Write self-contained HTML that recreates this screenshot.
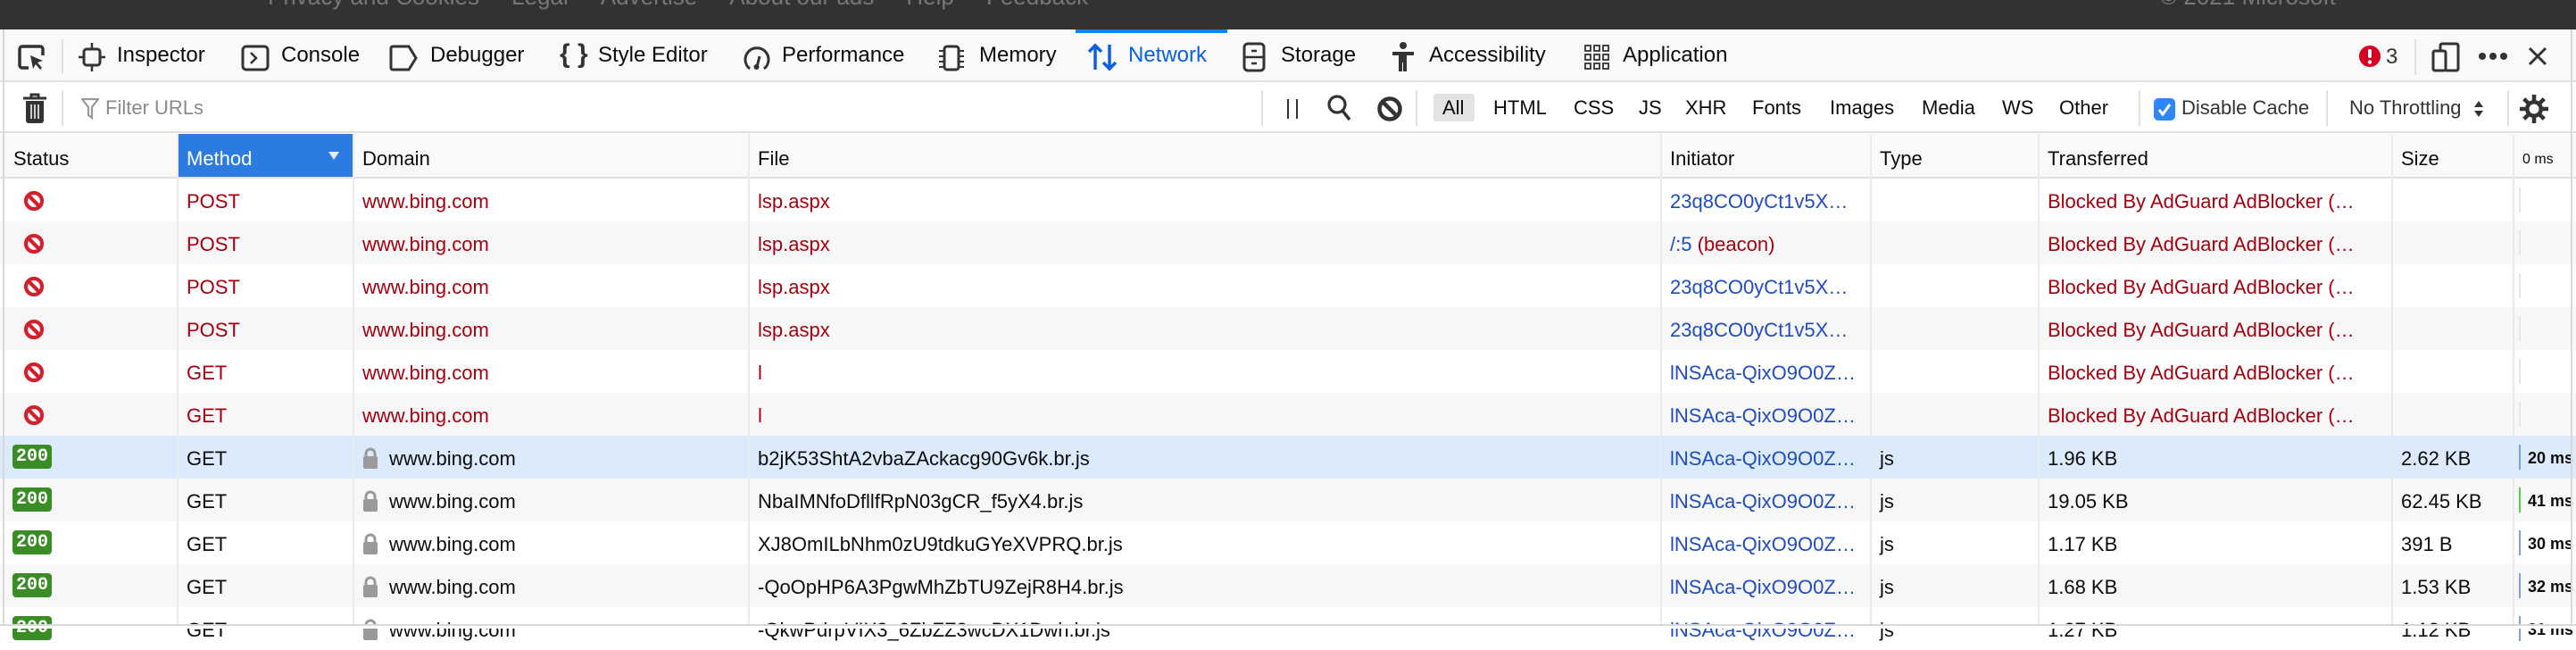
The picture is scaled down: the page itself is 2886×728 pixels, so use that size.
<!DOCTYPE html>
<html><head><meta charset="utf-8"><style>
*{margin:0;padding:0;box-sizing:border-box}
body{width:2886px;height:704px;overflow:hidden;background:#fff;font-family:"Liberation Sans",sans-serif;position:relative;color:#0c0c0d}
.a{position:absolute;white-space:nowrap}
.top{left:0;top:0;width:2886px;height:33px;background:#323232}
.tb{left:0;top:33px;width:2886px;height:59px;background:#f9f9fa;border-bottom:2px solid #e0e0e2}
.fr{left:0;top:93px;width:2886px;height:56px;background:#fff;border-bottom:2px solid #e0e0e2}
.hd{left:0;top:150px;width:2886px;height:50px;background:#f9f9fa;border-bottom:2px solid #e0e0e2}
.t{font-size:24px;top:48px;color:#0c0c0d}
.f{font-size:22px;top:108px;color:#0c0c0d}
.h{font-size:22px;top:165px;color:#0c0c0d}
.sep{width:2px;background:#e0e0e2}
.row{position:absolute;left:0;width:2886px;height:48px;font-size:22px}
.row span{position:absolute;top:13px;white-space:nowrap}
.r{color:#a4000f}
.b{color:#1f4dbd}
.vl{position:absolute;top:0;width:2px;height:704px;background:#ebebeb}
svg{position:absolute}
</style></head><body>
<div class="a top"></div>
<div class="a" style="left:300px;top:-19px;font-size:26px;color:#777">Privacy and Cookies&nbsp;&nbsp;&nbsp;&nbsp;&nbsp;Legal&nbsp;&nbsp;&nbsp;&nbsp;&nbsp;Advertise&nbsp;&nbsp;&nbsp;&nbsp;&nbsp;About our ads&nbsp;&nbsp;&nbsp;&nbsp;&nbsp;Help&nbsp;&nbsp;&nbsp;&nbsp;&nbsp;Feedback</div>
<div class="a" style="left:2420px;top:-19px;font-size:26px;color:#777">© 2021 Microsoft</div>

<div class="a tb"></div>
<svg style="left:20px;top:50px" width="32" height="30" viewBox="0 0 32 30"><path d="M12 26H5a3 3 0 0 1-3-3V5a3 3 0 0 1 3-3h20a3 3 0 0 1 3 3v7" fill="none" stroke="#333" stroke-width="3.5"/><path d="M14 12l14 6-6 2 5 6-2 2-5-6-3 5z" fill="#333"/></svg>
<div class="a sep" style="left:69px;top:44px;height:38px"></div>
<svg style="left:88px;top:47px" width="30" height="34" viewBox="0 0 30 34"><rect x="6" y="8" width="18" height="18" rx="3" fill="none" stroke="#333" stroke-width="3"/><path d="M15 1v7M15 26v7M0 17h6M24 17h6" stroke="#333" stroke-width="2.5"/></svg>
<div class="a t" style="left:131px">Inspector</div>
<svg style="left:270px;top:50px" width="32" height="30"><rect x="2" y="2" width="28" height="26" rx="4" fill="none" stroke="#333" stroke-width="3"/><path d="M11 9l6 6-6 6" fill="none" stroke="#333" stroke-width="2.5"/></svg>
<div class="a t" style="left:315px">Console</div>
<svg style="left:436px;top:50px" width="32" height="30"><path d="M4 2h18l8 13-8 13H4a2 2 0 0 1-2-2V4a2 2 0 0 1 2-2z" fill="none" stroke="#333" stroke-width="3"/></svg>
<div class="a t" style="left:482px">Debugger</div>
<div class="a" style="left:627px;top:44px;font-size:30px;color:#333;font-weight:bold">{&nbsp;}</div>
<div class="a t" style="left:670px">Style Editor</div>
<svg style="left:832px;top:49px" width="32" height="32"><path d="M8 28A13 13 0 1 1 24 28" fill="none" stroke="#333" stroke-width="3"/><path d="M16 26l3-12" stroke="#333" stroke-width="3"/><circle cx="15.5" cy="26" r="3" fill="#333"/></svg>
<div class="a t" style="left:876px">Performance</div>
<svg style="left:1050px;top:49px" width="32" height="32"><rect x="8" y="3" width="16" height="26" rx="3" fill="none" stroke="#333" stroke-width="3"/><path d="M2 8h5M2 14h5M2 20h5M2 26h5M25 8h5M25 14h5M25 20h5M25 26h5" stroke="#333" stroke-width="2"/></svg>
<div class="a t" style="left:1097px">Memory</div>
<div class="a" style="left:1205px;top:33px;width:170px;height:4px;background:#0a84ff"></div>
<svg style="left:1218px;top:48px" width="34" height="32"><path d="M9 30V3M2 10l7-7 7 7M25 2v27M18 22l7 7 7-7" fill="none" stroke="#0a60df" stroke-width="3.5"/></svg>
<div class="a t" style="left:1264px;color:#0a60df">Network</div>
<svg style="left:1392px;top:47px" width="26" height="34"><rect x="2" y="2" width="22" height="30" rx="4" fill="none" stroke="#333" stroke-width="3"/><path d="M2 17h22M10 10h6M10 24h6" stroke="#333" stroke-width="2.5"/></svg>
<div class="a t" style="left:1435px">Storage</div>
<svg style="left:1558px;top:46px" width="28" height="36"><circle cx="14" cy="5" r="4" fill="#333"/><path d="M2 12h24v4h-8v18h-4v-10h-1v10h-4V16H2z" fill="#333"/></svg>
<div class="a t" style="left:1601px">Accessibility</div>
<svg style="left:1775px;top:50px" width="28" height="28" fill="none" stroke="#333" stroke-width="1.8"><rect x="1" y="1" width="6" height="6"/><rect x="11" y="1" width="6" height="6"/><rect x="21" y="1" width="6" height="6"/><rect x="1" y="11" width="6" height="6"/><rect x="11" y="11" width="6" height="6"/><rect x="21" y="11" width="6" height="6"/><rect x="1" y="21" width="6" height="6"/><rect x="11" y="21" width="6" height="6"/><rect x="21" y="21" width="6" height="6"/></svg>
<div class="a t" style="left:1818px">Application</div>
<svg style="left:2643px;top:51px" width="24" height="24"><circle cx="12" cy="12" r="12" fill="#d70022"/><rect x="10" y="4" width="4" height="10" rx="2" fill="#fff"/><circle cx="12" cy="18.5" r="2.2" fill="#fff"/></svg>
<div class="a t" style="left:2673px;top:50px;color:#333">3</div>
<div class="a sep" style="left:2705px;top:44px;height:40px"></div>
<svg style="left:2724px;top:47px" width="34" height="34"><rect x="2" y="10" width="14" height="22" rx="2" fill="none" stroke="#333" stroke-width="3"/><path d="M10 10V4a2 2 0 0 1 2-2h16a2 2 0 0 1 2 2v26a2 2 0 0 1-2 2H16" fill="none" stroke="#333" stroke-width="3"/></svg>
<svg style="left:2776px;top:58px" width="34" height="10" fill="#333"><circle cx="5" cy="5" r="4"/><circle cx="17" cy="5" r="4"/><circle cx="29" cy="5" r="4"/></svg>
<svg style="left:2832px;top:52px" width="22" height="22"><path d="M2 2l18 18M20 2L2 20" stroke="#333" stroke-width="3"/></svg>

<div class="a fr"></div>
<svg style="left:25px;top:104px" width="28" height="36"><path d="M1 6h26M10 6V2h8v4" fill="none" stroke="#333" stroke-width="3"/><path d="M4 9h20v22a3 3 0 0 1-3 3H7a3 3 0 0 1-3-3z" fill="#333"/><path d="M10 13v16M14 13v16M18 13v16" stroke="#fff" stroke-width="1.5"/></svg>
<div class="a sep" style="left:69px;top:101px;height:40px"></div>
<svg style="left:91px;top:110px" width="20" height="24"><path d="M1 1h18l-7 9v12l-4-3v-9z" fill="none" stroke="#999" stroke-width="2.2"/></svg>
<div class="a f" style="left:118px;color:#8a8a8f">Filter URLs</div>
<div class="a sep" style="left:1413px;top:101px;height:40px"></div>
<div class="a" style="left:1442px;top:111px;width:2px;height:22px;background:#333"></div>
<div class="a" style="left:1452px;top:111px;width:2px;height:22px;background:#333"></div>
<svg style="left:1486px;top:105px" width="30" height="32"><circle cx="12" cy="12" r="9" fill="none" stroke="#333" stroke-width="3.2"/><path d="M18 19l8 10" stroke="#333" stroke-width="3.5"/></svg>
<svg style="left:1542px;top:107px" width="30" height="30"><circle cx="15" cy="15" r="11.5" fill="none" stroke="#333" stroke-width="4.5"/><path d="M7 7l16 16" stroke="#333" stroke-width="4.5"/></svg>
<div class="a sep" style="left:1586px;top:101px;height:40px"></div>
<div class="a" style="left:1606px;top:105px;width:46px;height:31px;background:#e3e3e5;border-radius:3px"></div>
<div class="a f" style="left:1616px">All</div>
<div class="a f" style="left:1673px">HTML</div>
<div class="a f" style="left:1763px">CSS</div>
<div class="a f" style="left:1836px">JS</div>
<div class="a f" style="left:1888px">XHR</div>
<div class="a f" style="left:1963px">Fonts</div>
<div class="a f" style="left:2050px">Images</div>
<div class="a f" style="left:2153px">Media</div>
<div class="a f" style="left:2243px">WS</div>
<div class="a f" style="left:2307px">Other</div>
<div class="a sep" style="left:2396px;top:101px;height:40px"></div>
<svg style="left:2413px;top:110px" width="24" height="25"><rect width="24" height="25" rx="5" fill="#2f86f6"/><path d="M6 13l4 5 8-11" fill="none" stroke="#fff" stroke-width="3"/></svg>
<div class="a f" style="left:2444px;color:#333">Disable Cache</div>
<div class="a sep" style="left:2606px;top:101px;height:40px"></div>
<div class="a f" style="left:2632px;color:#333">No Throttling</div>
<svg style="left:2771px;top:112px" width="12" height="20" fill="#333"><path d="M1 8l5-7 5 7zM1 12l5 7 5-7z"/></svg>
<div class="a sep" style="left:2809px;top:101px;height:40px"></div>
<svg style="left:2822px;top:105px" width="34" height="34" viewBox="0 0 34 34"><g stroke="#333" stroke-width="4.5"><path d="M17 1v32M1 17h32M5.7 5.7l22.6 22.6M28.3 5.7L5.7 28.3"/></g><circle cx="17" cy="17" r="10" fill="#333"/><circle cx="17" cy="17" r="5.5" fill="#fff"/></svg>

<div class="a hd"></div>
<div class="a" style="left:199px;top:150px;width:197px;height:48px;background:#2c7be0"></div>
<div class="a h" style="left:15px">Status</div>
<div class="a h" style="left:209px;color:#fff">Method</div>
<svg style="left:368px;top:170px" width="12" height="9"><path d="M0 0h12L6 9z" fill="#dfe9f8"/></svg>
<div class="a h" style="left:406px">Domain</div>
<div class="a h" style="left:849px">File</div>
<div class="a h" style="left:1871px">Initiator</div>
<div class="a h" style="left:2106px">Type</div>
<div class="a h" style="left:2294px">Transferred</div>
<div class="a h" style="left:2690px">Size</div>
<div class="a" style="left:2826px;top:170px;font-size:16px">0 ms</div>

<div id="rows"></div>
<script>
var R=[
['b','POST','lsp.aspx','23q8CO0yCt1v5X…','','Blocked By AdGuard AdBlocker (…','',''],
['b','POST','lsp.aspx','BEACON','','Blocked By AdGuard AdBlocker (…','',''],
['b','POST','lsp.aspx','23q8CO0yCt1v5X…','','Blocked By AdGuard AdBlocker (…','',''],
['b','POST','lsp.aspx','23q8CO0yCt1v5X…','','Blocked By AdGuard AdBlocker (…','',''],
['b','GET','l','lNSAca-QixO9O0Z…','','Blocked By AdGuard AdBlocker (…','',''],
['b','GET','l','lNSAca-QixO9O0Z…','','Blocked By AdGuard AdBlocker (…','',''],
['o','GET','b2jK53ShtA2vbaZAckacg90Gv6k.br.js','lNSAca-QixO9O0Z…','js','1.96 KB','2.62 KB','20 ms'],
['o','GET','NbaIMNfoDfllfRpN03gCR_f5yX4.br.js','lNSAca-QixO9O0Z…','js','19.05 KB','62.45 KB','41 ms'],
['o','GET','XJ8OmILbNhm0zU9tdkuGYeXVPRQ.br.js','lNSAca-QixO9O0Z…','js','1.17 KB','391 B','30 ms'],
['o','GET','-QoOpHP6A3PgwMhZbTU9ZejR8H4.br.js','lNSAca-QixO9O0Z…','js','1.68 KB','1.53 KB','32 ms'],
['o','GET','-QkwPdrpVIX3_6ZbZZ3wcDX1Dwh.br.js','lNSAca-QixO9O0Z…','js','1.27 KB','1.12 KB','31 ms']];
var h='';
R.forEach(function(r,i){
 var top=200+i*48, bg=i==6?'#dcebfb':(i%2?'#f7f7f7':'#fff');
 var bl=r[0]=='b', c=bl?'r':'';
 h+='<div class="row" style="top:'+top+'px;background:'+bg+'">';
 if(bl) h+='<svg style="left:26px;top:13px" width="24" height="24"><circle cx="12" cy="12" r="9" fill="none" stroke="#d0222e" stroke-width="4.2"/><path d="M5.5 5.5l13 13" stroke="#d0222e" stroke-width="4.2"/></svg>';
 else h+='<span style="left:14px;top:10px;background:#3a8d25;color:#fff;border-radius:4px;padding:1px 4px;font-family:\'Liberation Mono\',monospace;font-weight:bold;font-size:20px;line-height:25px">200</span>';
 h+='<span class="'+c+'" style="left:209px">'+r[1]+'</span>';
 if(!bl) h+='<svg style="left:405px;top:13px" width="20" height="24"><path d="M5 11V7a5 5 0 0 1 10 0v4" fill="none" stroke="#9a9a9c" stroke-width="3"/><rect x="2" y="10" width="16" height="14" rx="2" fill="#9a9a9c"/></svg>';
 h+='<span class="'+c+'" style="left:'+(bl?406:436)+'px">www.bing.com</span>';
 h+='<span class="'+c+'" style="left:849px">'+r[2]+'</span>';
 if(r[3]=='BEACON') h+='<span style="left:1871px"><b style="font-weight:normal;color:#1f4dbd">/:5</b> <b style="font-weight:normal;color:#a4000f">(beacon)</b></span>';
 else h+='<span class="b" style="left:1871px">'+r[3]+'</span>';
 h+='<span style="left:2106px">'+r[4]+'</span>';
 h+='<span class="'+c+'" style="left:2294px">'+r[5]+'</span>';
 h+='<span style="left:2690px">'+r[6]+'</span>';
 if(r[7]){h+='<div style="position:absolute;left:2822px;top:10px;width:2px;height:28px;background:'+(i==7?'#5ec850':'#7f9fd8')+'"></div><span style="left:2832px;top:15px;font-size:18px;font-weight:bold">'+r[7]+'</span>';}
 else h+='<div style="position:absolute;left:2822px;top:10px;width:2px;height:28px;background:#e6e6e6"></div>';
 h+='</div>';
});
document.getElementById('rows').innerHTML=h;
</script>
<div class="vl" style="left:198px;top:150px;height:554px"></div>
<div class="vl" style="left:395px;top:150px;height:554px"></div>
<div class="vl" style="left:838px;top:150px;height:554px"></div>
<div class="vl" style="left:1860px;top:150px;height:554px"></div>
<div class="vl" style="left:2095px;top:150px;height:554px"></div>
<div class="vl" style="left:2283px;top:150px;height:554px"></div>
<div class="vl" style="left:2679px;top:150px;height:554px"></div>
<div class="vl" style="left:2815px;top:150px;height:554px"></div>
<div class="a" style="left:3px;top:33px;width:2px;height:668px;background:#d8d8d8"></div>
<div class="a" style="left:2880px;top:33px;width:2px;height:668px;background:#d8d8d8"></div>
<div class="a" style="left:0;top:699px;width:2886px;height:5px;background:#fff;border-top:2px solid #d8d8d8"></div>
</body></html>
